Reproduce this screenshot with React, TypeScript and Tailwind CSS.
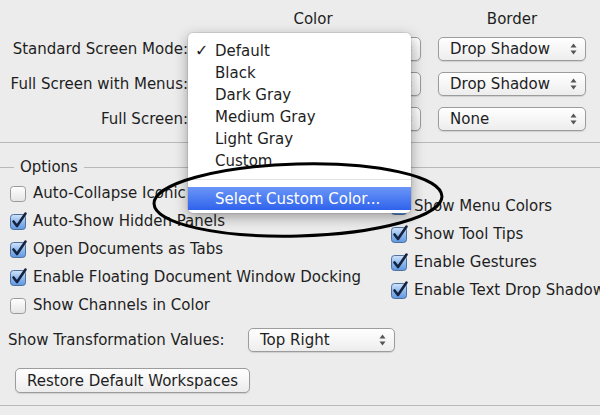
import React from "react"

const font = { fontFamily: '"DejaVu Sans", "Noto Sans", sans-serif' }

function Arrows() {
  return (
    <svg width="7" height="12" viewBox="0 0 7 12" className="shrink-0">
      <path d="M3.5 0.5 L6.5 4.5 L0.5 4.5 Z" fill="#555" />
      <path d="M3.5 11.5 L6.5 7.5 L0.5 7.5 Z" fill="#555" />
    </svg>
  )
}

function Popup({ label, className = "" }: { label?: string; className?: string }) {
  return (
    <div
      className={`flex h-[24px] items-center justify-between rounded-[5px] border border-[#9c9c9c] bg-gradient-to-b from-[#ffffff] to-[#ededed] pl-[11px] pr-[8px] text-[#1e1e1e] shadow-[0_1px_1px_rgba(0,0,0,0.12)] ${className}`}
    >
      <span className="pt-[1px]">{label}</span>
      <Arrows />
    </div>
  )
}

function Checkbox({ checked }: { checked: boolean }) {
  if (!checked) {
    return (
      <svg width="17" height="17" viewBox="0 0 17 17" className="shrink-0">
        <defs>
          <linearGradient id="ub" x1="0" y1="0" x2="0" y2="1">
            <stop offset="0" stopColor="#ffffff" />
            <stop offset="1" stopColor="#e4e4e4" />
          </linearGradient>
        </defs>
        <rect x="0.5" y="1.5" width="15" height="15" rx="3" fill="url(#ub)" stroke="#9a9a9a" />
      </svg>
    )
  }
  return (
    <svg width="17" height="17" viewBox="0 0 17 17" className="shrink-0 overflow-visible">
      <defs>
        <linearGradient id="cb" x1="0" y1="0" x2="0" y2="1">
          <stop offset="0" stopColor="#d2e4fa" />
          <stop offset="0.5" stopColor="#8fb9ee" />
          <stop offset="1" stopColor="#5f97e2" />
        </linearGradient>
      </defs>
      <rect x="0.5" y="1.5" width="15" height="15" rx="3" fill="url(#cb)" stroke="#4f6f9c" />
      <path d="M3.5 8.5 L7 13 L15.5 0.5" fill="none" stroke="#15233f" strokeWidth="2.6" strokeLinecap="round" strokeLinejoin="round" />
    </svg>
  )
}

function CheckRow({ label, checked }: { label: string; checked: boolean }) {
  return (
    <div className="flex h-[28px] items-center gap-[6px] whitespace-nowrap">
      <Checkbox checked={checked} />
      <span>{label}</span>
    </div>
  )
}

const modes = [
  { label: "Standard Screen Mode:", border: "Drop Shadow" },
  { label: "Full Screen with Menus:", border: "Drop Shadow" },
  { label: "Full Screen:", border: "None" },
]

const menuItems = ["Default", "Black", "Dark Gray", "Medium Gray", "Light Gray", "Custom"]

export default function App() {
  return (
    <div className="relative h-[415px] w-[600px] overflow-hidden bg-[#ececec] text-[15px] text-[#1e1e1e]" style={font}>
      {/* Screen modes */}
      <div className="border-b border-[#b9b9b9] pb-[11px] pt-[8px]">
        <div className="grid grid-cols-[188px_216px_148px] gap-x-[17px]">
          <div />
          <div className="flex h-[22px] items-center justify-center">Color</div>
          <div className="flex h-[22px] items-center justify-center">Border</div>
        </div>
        <div className="mt-[7px] flex flex-col gap-[11px]">
          {modes.map((m) => (
            <div key={m.label} className="grid grid-cols-[188px_216px_148px] items-center gap-x-[17px]">
              <div className="whitespace-nowrap pt-[1px] text-right">{m.label}</div>
              <Popup />
              <Popup label={m.border} />
            </div>
          ))}
        </div>
      </div>

      {/* Options */}
      <div className="mt-[14px] flex h-[20px] items-center">
        <div className="h-px w-[14px] bg-[#b9b9b9]" />
        <span className="px-[6px]">Options</span>
        <div className="h-px flex-1 bg-[#b9b9b9]" />
      </div>
      <div className="flex">
        <div className="flex w-[391px] shrink-0 flex-col pl-[10px] pt-[2px]">
          <CheckRow label="Auto-Collapse Iconic Panels" checked={false} />
          <CheckRow label="Auto-Show Hidden Panels" checked />
          <CheckRow label="Open Documents as Tabs" checked />
          <CheckRow label="Enable Floating Document Window Docking" checked />
          <CheckRow label="Show Channels in Color" checked={false} />
        </div>
        <div className="flex shrink-0 flex-col pt-[15px]">
          <CheckRow label="Show Menu Colors" checked />
          <CheckRow label="Show Tool Tips" checked />
          <CheckRow label="Enable Gestures" checked />
          <CheckRow label="Enable Text Drop Shadow" checked />
        </div>
      </div>

      <div className="mt-[9px] flex items-center pl-[8px]">
        <span className="w-[240px] whitespace-nowrap">Show Transformation Values:</span>
        <Popup label="Top Right" className="w-[147px]" />
      </div>

      <div className="mt-[16px] pl-[15px]">
        <div className="flex h-[25px] w-[235px] items-center justify-center rounded-[5px] border border-[#9c9c9c] bg-gradient-to-b from-[#ffffff] to-[#ececec] pt-[1px] shadow-[0_1px_1px_rgba(0,0,0,0.12)]">
          Restore Default Workspaces
        </div>
      </div>

      <div className="mt-[12px] border-t border-[#b9b9b9]" />

      {/* Open color menu */}
      <div className="absolute left-[188px] top-[33px] w-[223px] rounded-[5px] bg-white pb-[3px] pt-[7px] shadow-[0_4px_14px_rgba(0,0,0,0.35),0_0_0_1px_rgba(0,0,0,0.08)]">
        {menuItems.map((item, i) => (
          <div key={item} className="flex h-[22px] items-center">
            <span className="w-[27px] pl-[7px] text-[16px] font-bold">{i === 0 ? "✓" : ""}</span>
            <span>{item}</span>
          </div>
        ))}
        <div className="flex h-[15px] items-center">
          <div className="h-px w-full bg-[#e2e2e2]" />
        </div>
        <div className="flex h-[23px] items-center bg-gradient-to-b from-[#6b95f6] to-[#2f62ec] pl-[27px] pt-[1px] text-white">
          Select Custom Color...
        </div>
      </div>

      {/* Annotation ellipse */}
      <svg className="pointer-events-none absolute left-0 top-0" width="600" height="415">
        <ellipse cx="298" cy="200" rx="144" ry="36" transform="rotate(-1.5 298 200)" fill="none" stroke="#000" strokeWidth="3" />
      </svg>
    </div>
  )
}
